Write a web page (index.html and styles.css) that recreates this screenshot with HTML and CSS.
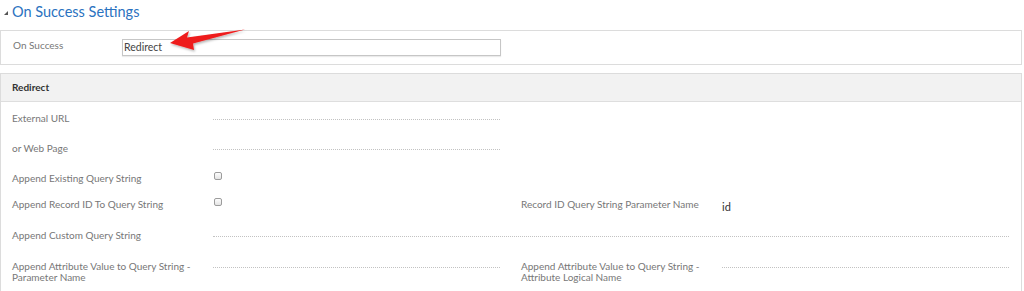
FILE: index.html
```html
<!DOCTYPE html>
<html>
<head>
<meta charset="utf-8">
<link rel="stylesheet" href="styles.css">
</head>
<body>
<div class="page">
  <div class="title-bar">
    <span class="twisty"></span>
    <h1 class="title">On Success Settings</h1>
  </div>

  <div class="box box-top">
    <div class="label">On Success</div>
    <div class="select">Redirect</div>
  </div>

  <div class="box box-main">
    <div class="band">Redirect</div>
    <div class="rows">
      <div class="row r1">
        <div class="label">External URL</div>
        <div class="field"></div>
      </div>
      <div class="row r2">
        <div class="label">or Web Page</div>
        <div class="field"></div>
      </div>
      <div class="row r3">
        <div class="label">Append Existing Query String</div>
        <div class="cell"><span class="check"></span></div>
      </div>
      <div class="row r4">
        <div class="label">Append Record ID To Query String</div>
        <div class="cell"><span class="check"></span></div>
        <div class="label label-right">Record ID Query String Parameter Name</div>
        <div class="value">id</div>
      </div>
      <div class="row r5">
        <div class="label">Append Custom Query String</div>
        <div class="field field-wide"></div>
      </div>
      <div class="row r6">
        <div class="label">Append Attribute Value to Query String - Parameter Name</div>
        <div class="field"></div>
        <div class="label label-right">Append Attribute Value to Query String - Attribute Logical Name</div>
        <div class="field"></div>
      </div>
    </div>
  </div>

  <svg class="arrow" width="90" height="30" viewBox="0 0 90 30">
    <defs>
      <filter id="sh" x="-20%" y="-40%" width="140%" height="180%">
        <feDropShadow dx="1" dy="1.5" stdDeviation="1" flood-color="#000" flood-opacity="0.3"/>
      </filter>
    </defs>
    <path d="M8 14 L27 2 L25 8.5 L83 0.5 L31 14.5 L32 21 Z" fill="#ee1c1c" filter="url(#sh)"/>
  </svg>
</div>
</body>
</html>
```

FILE: styles.css
```css
* { box-sizing: border-box; }
html, body { margin: 0; padding: 0; background: #fff; }
body {
  font-family: "Lato", "Open Sans", sans-serif;
  font-size: 10px;
  color: #777;
}
.page { position: relative; width: 1024px; height: 291px; overflow: hidden; }

.title-bar {
  height: 30px;
  display: flex;
  align-items: center;
  padding-left: 4px;
  padding-bottom: 7px;
}
.twisty {
  width: 0; height: 0;
  border-left: 4px solid transparent;
  border-bottom: 4px solid #555;
  margin-right: 4px;
  margin-top: 2px;
}
.title {
  margin: 0;
  font-weight: normal;
  font-size: 14.5px;
  color: #2a72c0;
}

.box {
  width: 1022px;
  border: 1px solid #dcdcdc;
}
.box-top {
  height: 35px;
  display: flex;
  align-items: center;
  padding-left: 12px;
}
.box-top .label { width: 109px; padding-bottom: 5px; }
.select {
  width: 379px;
  height: 17px;
  border: 1px solid #c6c6c6;
  box-shadow: 0 1px 1px rgba(0,0,0,0.08);
  color: #444;
  font-size: 10.5px;
  line-height: 15px;
  padding-left: 1px;
}

.box-main {
  margin-top: 8px;
  height: 230px;
  border-bottom: none;
}
.band {
  height: 28px;
  background: #f2f2f2;
  border-bottom: 1px solid #dedede;
  color: #333;
  font-weight: bold;
  padding-left: 11px;
  line-height: 27px;
}

.rows { padding-top: 11px; padding-left: 11px; }
.row { display: flex; align-items: flex-start; }
.r1, .r2 { height: 30px; }
.r3 { height: 26px; }
.r4, .r5 { height: 31px; }
.label { width: 201px; line-height: 11px; flex: none; }
.row .label { padding-right: 8px; }
.label-right { margin-left: 21px; }
.field {
  width: 287px;
  height: 7px;
  border-bottom: 1px dotted #c2c2c2;
  flex: none;
}
.field-wide { width: 796px; }
.cell { width: 287px; flex: none; }
.check {
  display: block;
  width: 8px;
  height: 8px;
  margin-left: 1px;
  margin-top: -1px;
  border: 1px solid #9c9c9c;
  border-radius: 2px;
  background: linear-gradient(#fdfdfd, #e4e4e4);
}
.value {
  color: #333;
  font-size: 11px;
  padding-top: 1px;
}

.arrow {
  position: absolute;
  left: 162px;
  top: 29px;
}
```
